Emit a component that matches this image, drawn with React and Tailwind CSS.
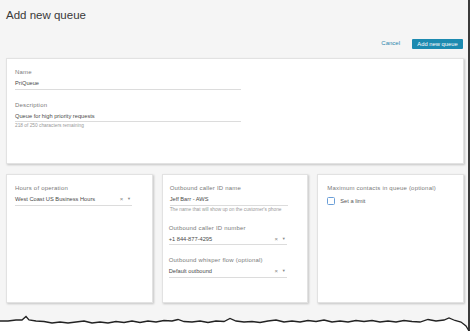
import React from "react";

const edge = [
  [0, 321], [8, 321], [16, 320], [22, 320], [26, 316.5], [29, 320], [36, 321], [44, 321.5], [52, 323], [60, 322],
  [68, 323], [76, 322], [84, 321], [92, 323], [100, 322], [108, 323], [116, 321.5], [124, 322.5], [132, 321],
  [140, 322.5], [148, 321], [156, 322], [164, 320.5], [172, 321], [178, 319.5], [184, 321.5], [192, 322], [200, 321],
  [208, 322.5], [216, 321], [224, 321.5], [230, 318.5], [236, 321], [244, 322], [252, 321.5], [260, 322.5],
  [268, 321], [276, 320], [284, 322], [292, 321], [300, 322], [308, 320.5], [316, 321.5], [324, 320], [332, 322],
  [340, 321], [348, 322], [356, 320.5], [364, 321.5], [372, 320.5], [380, 322], [388, 321], [396, 322],
  [404, 320.5], [412, 321.5], [420, 322], [428, 319.5], [436, 321], [444, 320], [449, 318], [455, 320.5],
  [461, 322], [466, 326], [469, 331],
];

const edgeLine = edge.map(([x, y], i) => `${i ? "L" : "M"}${x} ${y}`).join(" ");

const Label = ({ children }) => (
  <div className="text-[6px] leading-[8px] tracking-[0.2px] text-[#7a7a7a]">{children}</div>
);

const TextField = ({ label, value, width, hint }) => (
  <div>
    <Label>{label}</Label>
    <div
      className={`mt-[3px] pb-[1.5px] border-b border-[#dcdcdc] text-[5.7px] leading-[8px] text-[#4a4a4a] ${width}`}
    >
      {value}
    </div>
    {hint && <div className="mt-[1px] text-[4.8px] leading-[6px] text-[#999]">{hint}</div>}
  </div>
);

const SelectField = ({ label, value, width }) => (
  <div>
    <Label>{label}</Label>
    <div
      className={`mt-[3px] pb-[1.5px] border-b border-[#dcdcdc] flex items-center text-[5.7px] leading-[8px] text-[#4a4a4a] ${width}`}
    >
      <span className="flex-1">{value}</span>
      <span className="text-[6px] text-[#888] w-[9px] text-center">×</span>
      <span className="text-[4px] text-[#888] w-[6px] text-center">▼</span>
    </div>
  </div>
);

const Card = ({ className, children }) => (
  <div
    className={`bg-white border border-[#e2e2e2] shadow-[1px_1px_2px_rgba(0,0,0,0.2)] ${className}`}
  >
    {children}
  </div>
);

export default function App() {
  return (
    <div className="relative w-[474px] h-[331px] bg-white overflow-hidden font-['Liberation_Sans',Arial,sans-serif]">
      <div className="w-[470px] h-[331px] bg-[#f5f5f5] border-r-2 border-[#3a3a3a] pl-[6px] pr-[4px] flex flex-col">
        <div className="h-[58px] flex flex-col">
          <h1 className="pt-[8px] text-[11.5px] leading-[14px] text-[#3a3a3a]">Add new queue</h1>
          <div className="mt-[16.5px] flex items-center justify-end gap-[12px] pr-[1px]">
            <span className="text-[6px] text-[#2a86ad]">Cancel</span>
            <button className="h-[10.5px] w-[51px] bg-[#1c8ab0] text-white text-[5.8px] leading-[10.5px] rounded-[1px]">
              Add new queue
            </button>
          </div>
        </div>

        <Card className="h-[106px] pt-[9px] px-[8px] flex flex-col">
          <TextField label="Name" value="PriQueue" width="w-[226px]" />
          <div className="mt-[11px]">
            <TextField
              label="Description"
              value="Queue for high priority requests"
              width="w-[226px]"
              hint="218 of 250 characters remaining"
            />
          </div>
        </Card>

        <div className="mt-[10px] grid grid-cols-3 gap-[9px]">
          <Card className="h-[129px] pt-[9px] px-[8px]">
            <SelectField label="Hours of operation" value="West Coast US Business Hours" width="w-[117px]" />
          </Card>
          <Card className="h-[129px] pt-[9px] pl-[6px] pr-[8px]">
            <div className="pl-[1px]">
              <TextField
                label="Outbound caller ID name"
                value="Jeff Barr - AWS"
                width="w-[118px]"
                hint="The name that will show up on the customer's phone"
              />
            </div>
            <div className="mt-[11px]">
              <SelectField label="Outbound caller ID number" value="+1 844-877-4295" width="w-[118px]" />
            </div>
            <div className="mt-[11px]">
              <SelectField label="Outbound whisper flow (optional)" value="Default outbound" width="w-[118px]" />
            </div>
          </Card>
          <Card className="h-[129px] pt-[9px] pl-[9px]">
            <Label>Maximum contacts in queue (optional)</Label>
            <label className="mt-[5px] flex items-center gap-[5px]">
              <span className="w-[8px] h-[8px] rounded-[1.5px] border border-[#6b9fd8] bg-white" />
              <span className="text-[5.7px] leading-[8px] text-[#555]">Set a limit</span>
            </label>
          </Card>
        </div>
      </div>

      <svg className="absolute left-0 top-0" width="474" height="331" viewBox="0 0 474 331">
        <path d={`${edgeLine} L474 331 L474 331 L0 331 Z`} fill="#fff" />
        <path d={edgeLine} fill="none" stroke="#222" strokeWidth="1.3" />
      </svg>
    </div>
  );
}
